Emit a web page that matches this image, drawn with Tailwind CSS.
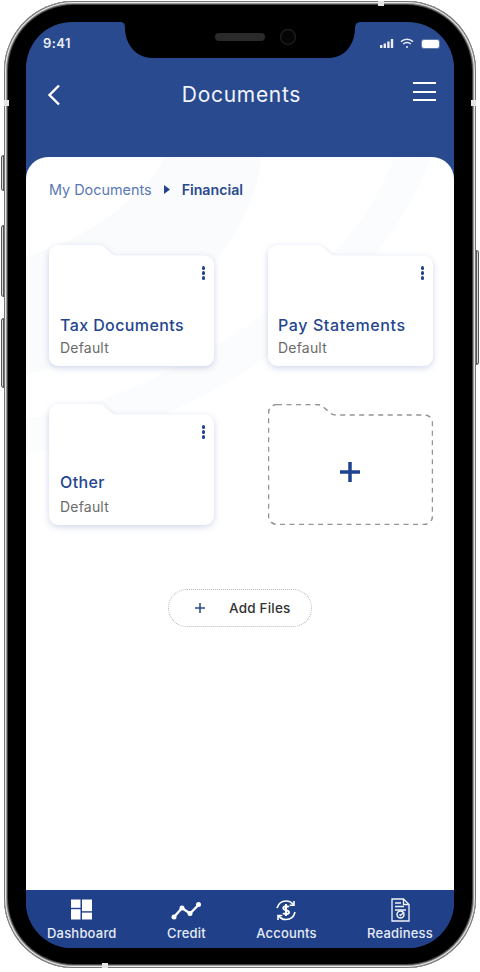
<!DOCTYPE html>
<html lang="en">
  <head>
    <meta charset="UTF-8" />
    <meta name="viewport" content="width=device-width, initial-scale=1.0" />
    <title>Documents</title>
    <script src="https://cdn.jsdelivr.net/npm/@tailwindcss/browser@4"></script>
  </head>
  <body class="bg-white">
    <div class="relative w-[480px] h-[972px] overflow-hidden bg-white font-['Inter','Liberation_Sans',sans-serif] pt-px pl-1">
      <!-- side buttons -->
      <div class="absolute left-[1px] top-[155px] w-[3px] h-[36px] bg-[#d8d8d8] border border-[#555] rounded-l-sm"></div>
      <div class="absolute left-[1px] top-[225px] w-[3px] h-[72px] bg-[#d8d8d8] border border-[#555] rounded-l-sm"></div>
      <div class="absolute left-[1px] top-[318px] w-[3px] h-[70px] bg-[#d8d8d8] border border-[#555] rounded-l-sm"></div>
      <div class="absolute left-[476px] top-[250px] w-[3px] h-[115px] bg-[#d8d8d8] border border-[#555] rounded-r-sm"></div>

      <!-- phone body -->
      <div class="relative w-[472px] h-[967px] rounded-[70px] bg-black pt-[21px] px-[22px] shadow-[inset_0_0_0_1px_#777,inset_0_0_0_2px_#e8e8e8,inset_0_0_0_3px_#999,inset_0_0_0_4px_#444]">
        <div class="absolute left-0 top-[99px] w-[5px] h-[6px] bg-[#e5e5e5]"></div>
        <div class="absolute right-0 top-[99px] w-[5px] h-[6px] bg-[#e5e5e5]"></div>
        <div class="absolute left-[374px] top-0 w-[6px] h-[5px] bg-[#e5e5e5]"></div>
        <div class="absolute left-[98px] bottom-0 w-[6px] h-[5px] bg-[#e5e5e5]"></div>

        <!-- screen -->
        <div class="relative w-[428px] h-[926px] rounded-[46px] overflow-hidden bg-[#2a4a90] flex flex-col">
          <!-- notch -->
          <svg class="absolute left-0 top-0" width="428" height="38" viewBox="0 0 428 38">
            <path d="M94 0C98 0 99 2 99 6C99 22 110 36 126 36H303C319 36 329 22 329 6C329 2 331 0 335 0Z" fill="#000" />
            <rect x="189" y="11" width="50" height="8" rx="4" fill="#2a2a2a" />
            <circle cx="262" cy="15" r="7.5" fill="#050505" stroke="#1c1c1c" stroke-width="1.5" />
          </svg>

          <header class="h-[135px] shrink-0 text-white">
            <div class="flex items-center justify-between pt-[9px] pl-[17px] pr-[15px] h-[34px]">
              <span class="text-[13px] font-semibold tracking-[0.4px] text-[#e8edf6]">9:41</span>
              <div class="flex items-center gap-[6px]">
                <svg width="14" height="9" viewBox="0 0 14 9" fill="#e8edf6">
                  <rect x="0" y="6" width="2.4" height="3" />
                  <rect x="3.6" y="4.5" width="2.4" height="4.5" />
                  <rect x="7.2" y="2.5" width="2.4" height="6.5" />
                  <rect x="10.8" y="0" width="2.4" height="9" />
                </svg>
                <svg width="14" height="11" viewBox="0 0 14 11" fill="none" stroke="#e8edf6" stroke-width="1.5">
                  <path d="M1 3.6C4.4 .4 9.6 .4 13 3.6" />
                  <path d="M3.2 6C5.3 4 8.7 4 10.8 6" />
                  <circle cx="7" cy="9" r="1" fill="#e8edf6" stroke="none" />
                </svg>
                <div class="ml-[2px] w-[17px] h-[8px] rounded-[2px] bg-white shadow-[0_0_0_1px_#5f79ad]"></div>
              </div>
            </div>
            <div class="grid grid-cols-[1fr_auto_1fr] items-center pt-[23px] pl-[21px] pr-[18px]">
              <svg width="14" height="22" viewBox="0 0 14 22" fill="none" stroke="#fff" stroke-width="2.4">
                <path d="M12 1.5L2.5 11L12 20.5" />
              </svg>
              <h1 class="text-[21px] font-normal tracking-[0.7px] text-[#f1f4fa]">Documents</h1>
              <div class="justify-self-end mb-[6px] flex flex-col gap-[6.5px] w-[23px]">
                <div class="h-[2px] bg-white"></div>
                <div class="h-[2px] bg-white"></div>
                <div class="h-[2px] bg-white"></div>
              </div>
            </div>
          </header>

          <main class="relative flex-1 bg-white rounded-t-[22px] overflow-hidden">
            <!-- faint swoosh behind the content -->
            <svg class="absolute left-0 top-0" width="428" height="320" viewBox="0 0 428 320">
              <path d="M140 0C110 50 50 85 0 100V218C130 190 228 90 235 0Z" fill="#f9fbfc" />
              <path d="M368 0C340 80 260 160 120 225C80 243 40 255 0 262V296C170 275 350 150 405 0Z" fill="#fbfcfd" />
            </svg>

            <div class="relative">
              <nav class="flex items-center pl-[23px] pt-[23px] h-[42px]">
                <span class="text-[14.400px] text-[#5b78b4]">My Documents</span>
                <svg class="ml-[12px] mr-[12px]" width="6" height="9" viewBox="0 0 6 9"><path d="M0 0L6 4.5L0 9Z" fill="#22448e" /></svg>
                <span class="text-[14.200px] font-semibold text-[#2a4a90]">Financial</span>
              </nav>

              <div class="grid grid-cols-[165px_165px] gap-x-[54px] gap-y-[38px] pl-[23px] mt-[46px]">
                <div class="relative h-[121px] flex flex-col pt-[21px] pl-[11px] pr-[9px] pb-[8px]">
                  <svg class="absolute left-0 top-0 overflow-visible drop-shadow-[0_2px_3px_rgba(70,90,170,0.25)]" width="165" height="121" viewBox="0 0 165 121">
                    <path d="M9 0H48C52 0 54 1 56 3L61 7.500C63 9.500 65 10.500 68 10.500H156A9 9 0 0 1 165 19.500V112A9 9 0 0 1 156 121H9A9 9 0 0 1 0 112V9A9 9 0 0 1 9 0Z" fill="#fff" />
                  </svg>
                  <div class="relative self-end flex flex-col gap-[1.500px]">
                    <i class="block w-[3.500px] h-[3.500px] rounded-full bg-[#1f4391]"></i>
                    <i class="block w-[3.500px] h-[3.500px] rounded-full bg-[#1f4391]"></i>
                    <i class="block w-[3.500px] h-[3.500px] rounded-full bg-[#1f4391]"></i>
                  </div>
                  <p class="relative mt-auto text-[16px] font-medium leading-[20px] tracking-[0.4px] text-[#23468f] whitespace-nowrap">Tax Documents</p>
                  <p class="relative mt-[3px] text-[14px] leading-[20px] tracking-[0.2px] text-[#6b6b6b]">Default</p>
                </div>

                <div class="relative h-[121px] flex flex-col pt-[21px] pl-[10px] pr-[9px] pb-[8px]">
                  <svg class="absolute left-0 top-0 overflow-visible drop-shadow-[0_2px_3px_rgba(70,90,170,0.25)]" width="165" height="121" viewBox="0 0 165 121">
                    <path d="M9 0H48C52 0 54 1 56 3L61 7.500C63 9.500 65 10.500 68 10.500H156A9 9 0 0 1 165 19.500V112A9 9 0 0 1 156 121H9A9 9 0 0 1 0 112V9A9 9 0 0 1 9 0Z" fill="#fff" />
                  </svg>
                  <div class="relative self-end flex flex-col gap-[1.500px]">
                    <i class="block w-[3.500px] h-[3.500px] rounded-full bg-[#1f4391]"></i>
                    <i class="block w-[3.500px] h-[3.500px] rounded-full bg-[#1f4391]"></i>
                    <i class="block w-[3.500px] h-[3.500px] rounded-full bg-[#1f4391]"></i>
                  </div>
                  <p class="relative mt-auto text-[16px] font-medium leading-[20px] tracking-[0.6px] text-[#23468f] whitespace-nowrap">Pay Statements</p>
                  <p class="relative mt-[3px] text-[14px] leading-[20px] tracking-[0.2px] text-[#6b6b6b]">Default</p>
                </div>

                <div class="relative h-[121px] flex flex-col pt-[21px] pl-[11px] pr-[9px] pb-[8px]">
                  <svg class="absolute left-0 top-0 overflow-visible drop-shadow-[0_2px_3px_rgba(70,90,170,0.25)]" width="165" height="121" viewBox="0 0 165 121">
                    <path d="M9 0H48C52 0 54 1 56 3L61 7.500C63 9.500 65 10.500 68 10.500H156A9 9 0 0 1 165 19.500V112A9 9 0 0 1 156 121H9A9 9 0 0 1 0 112V9A9 9 0 0 1 9 0Z" fill="#fff" />
                  </svg>
                  <div class="relative self-end flex flex-col gap-[1.500px]">
                    <i class="block w-[3.500px] h-[3.500px] rounded-full bg-[#1f4391]"></i>
                    <i class="block w-[3.500px] h-[3.500px] rounded-full bg-[#1f4391]"></i>
                    <i class="block w-[3.500px] h-[3.500px] rounded-full bg-[#1f4391]"></i>
                  </div>
                  <p class="relative mt-auto text-[16px] font-medium leading-[20px] tracking-[0.4px] text-[#23468f]">Other</p>
                  <p class="relative mt-[5px] text-[14px] leading-[20px] tracking-[0.2px] text-[#6b6b6b]">Default</p>
                </div>

                <button class="relative h-[121px] flex items-center justify-center pt-[14px] pr-[1px]">
                  <svg class="absolute left-0 top-0" width="165" height="121" viewBox="0 0 165 121" fill="none">
                    <path d="M9 .5H48C52 .5 54 1.500 56 3.500L61 8C63 10 65 11 68 11H156A8 8 0 0 1 164.500 19.500V112A8.500 8.500 0 0 1 156 120.500H9A8.500 8.500 0 0 1 .5 112V9A8.500 8.500 0 0 1 9 .5Z" stroke="#949494" stroke-width="1.500" stroke-dasharray="5 4.500" />
                  </svg>
                  <svg class="relative" width="20" height="20" viewBox="0 0 20 20" stroke="#1f4391" stroke-width="3.500">
                    <path d="M0 10H20M10 0V20" />
                  </svg>
                </button>
              </div>

              <button class="mt-[64px] mx-auto flex items-center w-[144px] h-[38px] pl-[26px] rounded-full border border-dotted border-[#b5b5b5] bg-white">
                <svg width="10" height="10" viewBox="0 0 10 10" stroke="#27488f" stroke-width="1.500"><path d="M0 5H10M5 0V10" /></svg>
                <span class="ml-[24px] mt-[1px] text-[13.500px] font-medium tracking-[0.2px] text-[#333]">Add Files</span>
              </button>
            </div>
          </main>

          <nav class="h-[58px] shrink-0 bg-[#20418a] flex justify-between pl-[21px] pr-[21px] pt-[9px] text-[13px] font-medium tracking-[0.2px] text-[#e6ebf5]">
            <div class="flex flex-col items-center">
              <svg width="21" height="20" viewBox="0 0 21 20" fill="#fff" class="h-[24px] pb-[3px]">
                <rect x="0" y="0" width="9.500" height="8.300" />
                <rect x="0" y="9.700" width="9.500" height="10.300" />
                <rect x="11" y="0" width="10" height="11.700" />
                <rect x="11" y="13.100" width="10" height="6.900" />
              </svg>
              <span class="leading-[20px]">Dashboard</span>
            </div>
            <div class="flex flex-col items-center">
              <svg width="30" height="24" viewBox="0 0 30 24" fill="none" stroke="#fff" stroke-width="2.400">
                <path d="M3 18L11 9L19 14.500L28 5.500" />
                <circle cx="3" cy="18" r="2.500" fill="#fff" stroke="none" />
                <circle cx="11" cy="9" r="2.500" fill="#fff" stroke="none" />
                <circle cx="19" cy="14.500" r="2.500" fill="#fff" stroke="none" />
                <circle cx="27.500" cy="5.500" r="2.500" fill="#fff" stroke="none" />
              </svg>
              <span class="leading-[20px]">Credit</span>
            </div>
            <div class="flex flex-col items-center">
              <svg width="24" height="24" viewBox="0 0 24 24" fill="none" stroke="#fff" stroke-width="1.600">
                <path d="M3 9C4.500 4.500 8 2 12 2C15 2 17.500 3 19 5.500" />
                <path d="M21 13C20 17.500 16.500 20.500 12 20.500C9 20.500 6.500 19.500 5 17" />
                <path d="M20 2V6.300H15.700" />
                <path d="M4 21V16.500H8.300" />
                <path d="M14.800 8.300C13.800 6.800 9.300 6.800 9.300 9.300C9.300 11.900 15 10.500 15 13.300C15 15.700 10.300 15.500 9.200 14M12 5V17" stroke-width="1.900" />
              </svg>
              <span class="leading-[20px]">Accounts</span>
            </div>
            <div class="flex flex-col items-center">
              <svg width="19" height="24" viewBox="0 0 19 24" fill="none" stroke="#f1f4fa" stroke-width="1.300" class="-mt-[1px]">
                <path d="M1 1H12.500L18 6.500V23H1Z" />
                <path d="M12.500 1V6.500H18" />
                <path d="M4 5H10M4 8.500H13M4 12H15" />
                <circle cx="9.500" cy="16.500" r="3.500" stroke-width="1.500" />
                <path d="M8.500 16.500L9.500 17.500L13 14" />
              </svg>
              <span class="leading-[20px] mt-[1px]">Readiness</span>
            </div>
          </nav>
        </div>
      </div>
    </div>
  </body>
</html>
